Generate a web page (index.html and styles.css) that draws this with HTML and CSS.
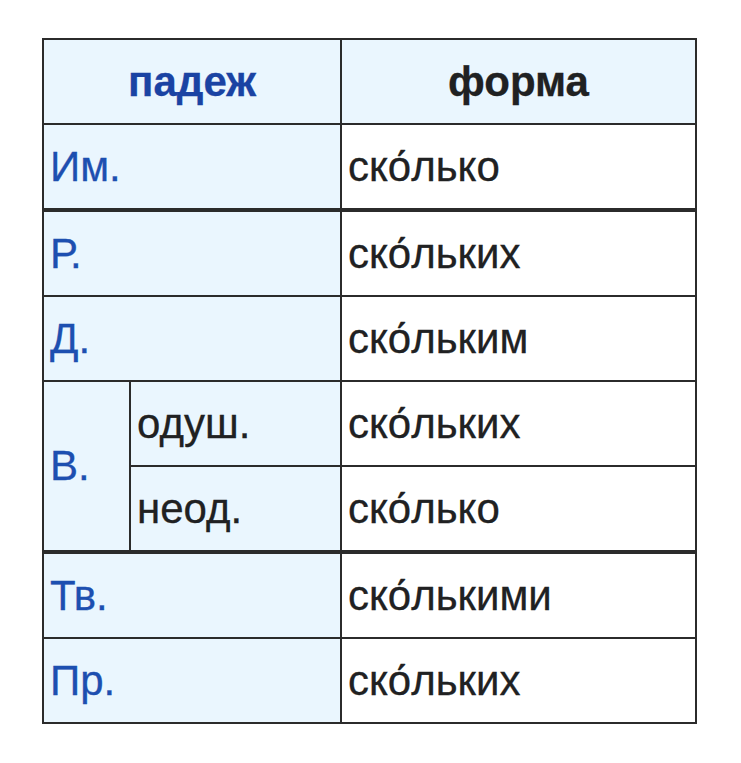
FILE: index.html
```html
<!DOCTYPE html>
<html lang="ru">
<head>
<meta charset="utf-8">
<title>сколько</title>
<link rel="stylesheet" href="styles.css">
</head>
<body>
<table class="decl">
  <colgroup>
    <col class="c1"><col class="c2"><col class="c3">
  </colgroup>
  <tr class="head">
    <th colspan="2" class="case-head"><a href="#">падеж</a></th>
    <th>форма</th>
  </tr>
  <tr class="sep">
    <td colspan="2" class="case"><a href="#">Им.</a></td>
    <td class="form">ско́лько</td>
  </tr>
  <tr>
    <td colspan="2" class="case"><a href="#">Р.</a></td>
    <td class="form">ско́льких</td>
  </tr>
  <tr>
    <td colspan="2" class="case"><a href="#">Д.</a></td>
    <td class="form">ско́льким</td>
  </tr>
  <tr>
    <td rowspan="2" class="case span-end"><a href="#">В.</a></td>
    <td class="case sub">одуш.</td>
    <td class="form">ско́льких</td>
  </tr>
  <tr class="sep">
    <td class="case sub">неод.</td>
    <td class="form">ско́лько</td>
  </tr>
  <tr>
    <td colspan="2" class="case"><a href="#">Тв.</a></td>
    <td class="form">ско́лькими</td>
  </tr>
  <tr>
    <td colspan="2" class="case"><a href="#">Пр.</a></td>
    <td class="form">ско́льких</td>
  </tr>
</table>
</body>
</html>
```
FILE: styles.css
```css
html, body {
  margin: 0;
  padding: 0;
  background: #ffffff;
}

body {
  font-family: "Liberation Sans", Arial, sans-serif;
  font-size: 42px;
  color: #202122;
}

.decl {
  border-collapse: collapse;
  margin: 38px 0 0 42px;
  width: 653px;
  table-layout: fixed;
  border: 2px solid #2b2b2b;
}

.c1 { width: 87px; }
.c2 { width: 211px; }
.c3 { width: 355px; }

.decl th,
.decl td {
  border: 2px solid #2b2b2b;
  height: 83px;
  padding: 0 6px;
  vertical-align: middle;
  line-height: 1;
  -webkit-text-stroke: 0.3px currentColor;
}

.decl a {
  color: #1d4fb0;
  text-decoration: none;
}

.head th {
  background: #eaf6fe;
  font-weight: bold;
  text-align: center;
  color: #202122;
}

.case-head a {
  color: #1a43a3;
}

.case {
  background: #eaf6fe;
  text-align: left;
  padding-left: 5px;
}

.sub {
  padding-left: 10px;
  color: #202122;
}

.form {
  background: #ffffff;
  padding-left: 7px;
}

.sep td,
.decl td.span-end {
  border-bottom: 4px solid #2b2b2b;
}
```
